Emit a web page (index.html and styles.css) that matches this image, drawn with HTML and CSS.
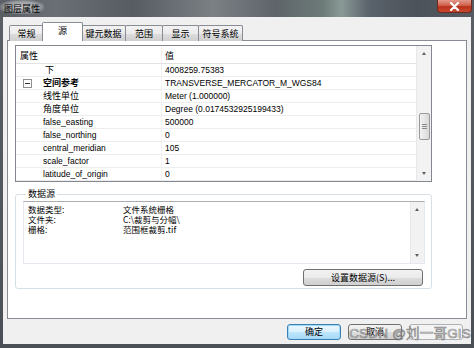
FILE: index.html
```html
<!DOCTYPE html>
<html lang="zh">
<head>
<meta charset="utf-8">
<title>图层属性</title>
<link rel="stylesheet" href="styles.css">
</head>
<body>
<div class="window">
  <div class="titlebar">
    <span class="title">图层属性</span>
    <span class="close"><svg width="11" height="9" viewBox="0 0 11 9"><path d="M2 1 L9 8 M9 1 L2 8" stroke="#fff" stroke-width="2.2" stroke-linecap="round"/></svg></span>
  </div>
  <div class="client">
    <div class="tabs">
      <div class="tab t1">常规</div>
      <div class="tab sel">源</div>
      <div class="tab t3">键元数据</div>
      <div class="tab t4">范围</div>
      <div class="tab t5">显示</div>
      <div class="tab t6">符号系统</div>
    </div>
    <div class="panel">
      <div class="grid">
        <div class="grid-main">
          <div class="ghead"><span class="c1">属性</span><span class="c2">值</span></div>
          <div class="row"><span class="c1 ind1">下</span><span class="c2 en">4008259.75383</span></div>
          <div class="row"><span class="c1 grp"><span class="exp"></span><b>空间参考</b></span><span class="c2 en">TRANSVERSE_MERCATOR_M_WGS84</span></div>
          <div class="row"><span class="c1">线性单位</span><span class="c2 en">Meter (1.000000)</span></div>
          <div class="row"><span class="c1">角度单位</span><span class="c2 en">Degree (0.0174532925199433)</span></div>
          <div class="row"><span class="c1 en">false_easting</span><span class="c2 en">500000</span></div>
          <div class="row"><span class="c1 en">false_northing</span><span class="c2 en">0</span></div>
          <div class="row"><span class="c1 en">central_meridian</span><span class="c2 en">105</span></div>
          <div class="row"><span class="c1 en">scale_factor</span><span class="c2 en">1</span></div>
          <div class="row"><span class="c1 en">latitude_of_origin</span><span class="c2 en">0</span></div>
        </div>
        <div class="vscroll">
          <span class="arr up"></span>
          <span class="track"><span class="thumb"><i></i><i></i><i></i></span></span>
          <span class="arr down"></span>
        </div>
      </div>
      <fieldset class="group">
        <legend>数据源</legend>
        <div class="textbox">
          <div class="tb-text">
            <div class="tline"><span class="k">数据类型:</span><span>文件系统栅格</span></div>
            <div class="tline"><span class="k">文件夹:</span><span>C:\裁剪与分幅\</span></div>
            <div class="tline"><span class="k">栅格:</span><span>范围框裁剪.tif</span></div>
          </div>
          <div class="tb-scroll"><span class="arr up"></span><span class="arr down"></span></div>
        </div>
        <div class="btnrow"><button class="btn wide">设置数据源(S)...</button></div>
      </fieldset>
    </div>
    <div class="bottombar">
      <button class="btn def">确定</button>
      <button class="btn">取消</button>
      <button class="btn ghost"></button>
    </div>
  </div>
  <div class="watermark">CSDN @刘一哥GIS</div>
</div>
</body>
</html>
```

FILE: styles.css
```css
* { box-sizing: border-box; margin: 0; padding: 0; }
body {
  width: 474px; height: 348px; overflow: hidden;
  font-family: "Liberation Sans", "Noto Sans CJK SC", sans-serif;
  font-size: 9px; color: #000; background: #50555c;
}
.window {
  position: relative;
  width: 474px; height: 348px;
  display: flex; flex-direction: column;
  background: linear-gradient(180deg, #5b6067 0%, #4b5057 100%);
}
.titlebar {
  height: 17px; flex: none;
  display: flex; justify-content: space-between; align-items: flex-start;
  background: linear-gradient(90deg, #5a5f66 0%, #6a6f75 12%, #575c63 28%, #7b8085 45%, #5e646a 58%, #6c7a78 68%, #8a9a96 72%, #59616a 78%, #4c5259 88%, #575c63 100%);
}
.title {
  padding: 3px 0 0 4px; font-size: 9px; line-height: 11px;
  font-family: "Noto Sans CJK SC", sans-serif; color: #000;
  background: radial-gradient(ellipse at center, rgba(235,235,235,.75) 0%, rgba(220,220,220,.45) 55%, rgba(220,220,220,0) 80%);
  padding-right: 4px;
}
.close {
  width: 35px; height: 13px; margin-right: 2px;
  display: flex; align-items: center; justify-content: center;
  border: 1px solid #6b2a22; border-top: none; border-radius: 0 0 4px 4px;
  background: linear-gradient(180deg, #e39a8c 0%, #d0614c 45%, #b9321c 55%, #c9482e 100%);
}
.client {
  flex: 1; margin: 0 3px 4px 3px;
  background: #f0f0f0;
  display: flex; flex-direction: column;
  padding: 5px 4px 0 4px;
}
.tabs {
  display: flex; align-items: flex-end; height: 19px;
  padding-left: 2px; margin-bottom: -1px; position: relative; z-index: 1;
  font-family: "Noto Sans CJK SC", sans-serif;
}
.tab {
  height: 16px; border: 1px solid #898c95; border-bottom: none;
  border-radius: 2px 2px 0 0;
  background: linear-gradient(180deg, #f3f3f3 0%, #ebebeb 50%, #dddddd 51%, #cfcfcf 100%);
  display: flex; align-items: center; justify-content: center;
  line-height: 12px; margin-left: -1px;
}
.t1 { width: 35px; margin-left: 0; }
.sel { width: 41px; height: 19px; margin-left: -2px; background: #fff; position: relative; z-index: 2; align-items: flex-start; padding-top: 2px; }
.t3 { width: 45px; margin-left: -2px; }
.t4 { width: 38px; }
.t5 { width: 37px; }
.t6 { width: 45px; }
.panel {
  height: 279px; flex: none;
  border: 1px solid #898c95; background: #fff;
  padding: 4px 0 0 7px;
}
.grid {
  width: 417px; height: 137px;
  border: 1px solid #828790;
  display: flex;
}
.grid-main { flex: 1; display: flex; flex-direction: column; }
.ghead {
  height: 18px; display: flex; align-items: center;
  border-bottom: 1px solid #e2e2e2;
  font-family: "Noto Sans CJK SC", sans-serif;
  padding-top: 2px;
}
.row {
  height: 13px; display: flex; align-items: center;
  border-bottom: 1px solid #ededed; line-height: 12px;
  font-family: "Noto Sans CJK SC", sans-serif;
}
.c1 { width: 146px; flex: none; padding-left: 27px; height: 100%; display: flex; align-items: center; border-right: 1px solid #f2f2f2; }
.ghead .c1 { padding-left: 4px; border-right: 1px solid #f0f0f0; }
.c2 { padding-left: 3px; }
.ind1 { padding-left: 29px; }
.en { font-family: "Liberation Sans", sans-serif; font-size: 8.5px; }
.grp { padding-left: 7px; }
.grp b { font-weight: 700; margin-left: 11px; }
.exp {
  width: 9px; height: 9px; border: 1px solid #8e8f8f; background: #fff;
  position: relative; flex: none;
}
.exp::after { content: ""; position: absolute; left: 1px; right: 1px; top: 3px; height: 1px; background: #333; }
.vscroll {
  width: 15px; flex: none; background: #f2f2f2;
  border-left: 1px solid #e8e8e8;
  display: flex; flex-direction: column; align-items: center;
}
.arr { width: 15px; height: 15px; flex: none; position: relative; }
.arr::after {
  content: ""; position: absolute; left: 5px; top: 6px;
  border-left: 2.5px solid transparent; border-right: 2.5px solid transparent;
}
.arr.up::after { border-bottom: 3px solid #606060; }
.arr.down::after { border-top: 3px solid #606060; }
.track { flex: 1; width: 100%; display: flex; flex-direction: column; align-items: center; padding-top: 52px; }
.thumb {
  width: 11px; height: 27px;
  border: 1px solid #9a9a9a; border-radius: 2px;
  background: linear-gradient(90deg, #f3f3f3, #e6e6e6 50%, #d9d9d9);
  display: flex; flex-direction: column; align-items: center; justify-content: center; gap: 1px;
}
.thumb i { width: 5px; height: 1px; background: #8a8a8a; display: block; }
.group {
  width: 417px; height: 101px; margin-top: 6px;
  border: 1px solid #d5dfe5; border-radius: 3px;
  padding: 0 6px 2px 7px;
}
.group legend {
  margin-left: 3px; padding: 0 2px; line-height: 12px;
  font-family: "Noto Sans CJK SC", sans-serif;
}
.textbox {
  margin-top: 1px; height: 63px;
  border: 1px solid #e3e9ef; border-top-color: #abadb3;
  display: flex;
}
.tb-text { flex: 1; padding: 2px 0 0 4px; }
.tline { display: flex; height: 10px; line-height: 10px; font-size: 8.5px; font-family: "Noto Sans CJK SC", sans-serif; overflow: hidden; }
.tline .k { width: 95px; }
.tb-scroll {
  width: 14px; background: #f2f2f2; border-left: 1px solid #e8e8e8;
  display: flex; flex-direction: column; justify-content: space-between;
}
.tb-scroll .arr { width: 13px; }
.tb-scroll .arr::after { left: 4px; }
.btnrow { display: flex; justify-content: flex-end; padding-right: 2px; margin-top: 5px; }
.btn {
  height: 16px; width: 54px;
  border: 1px solid #707070; border-radius: 3px;
  background: linear-gradient(180deg, #f2f2f2 0%, #ebebeb 50%, #dddddd 51%, #cfcfcf 100%);
  font-family: "Noto Sans CJK SC", sans-serif; font-size: 9px; color: #000;
  line-height: 12px; padding: 0;
}
.btn.wide { width: 120px; height: 17px; }
.bottombar {
  flex: 1; display: flex; justify-content: flex-end; align-items: center;
  gap: 7px; padding: 1px 4px 0 0;
}
.btn.def {
  border-color: #3c7fb1;
  box-shadow: inset 0 0 0 1px #9fd9f8;
  background: linear-gradient(180deg, #eaf6fd 0%, #d9f0fc 50%, #bee6fd 51%, #a7d9f5 100%);
}
.btn.ghost { border-color: #adb2b5; background: #f4f4f4; }
.watermark {
  position: absolute; right: 3px; bottom: 6px;
  font-family: "Liberation Sans", "Noto Sans CJK SC", sans-serif;
  font-size: 13.5px; line-height: 16px; letter-spacing: 0.2px;
  color: rgba(245,245,245,.55);
  -webkit-text-stroke: 0.7px rgba(95,95,95,.75);
}
```
